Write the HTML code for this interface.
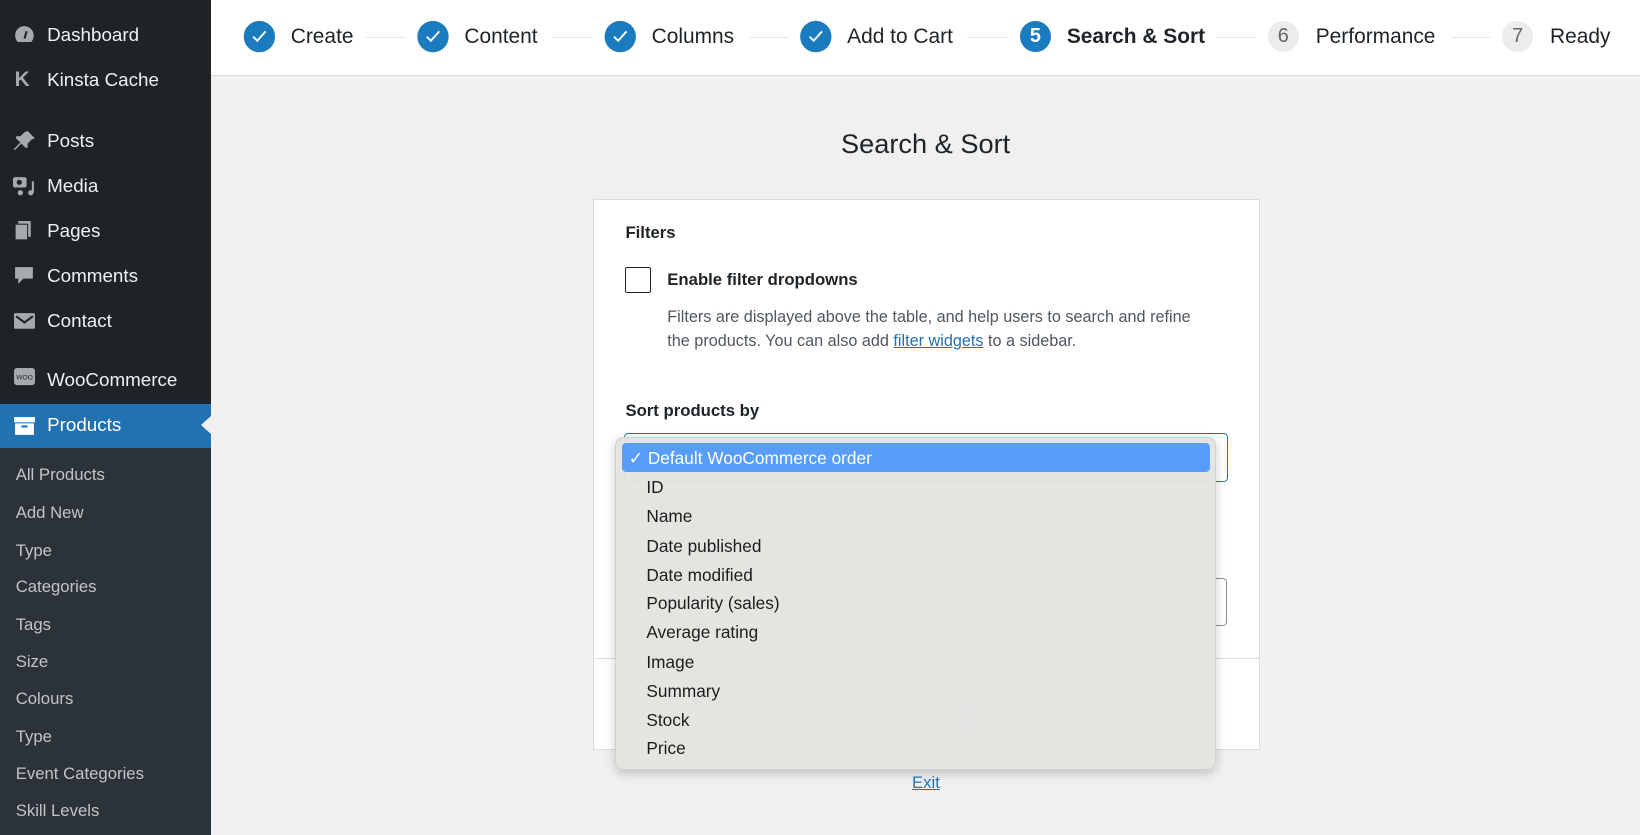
<!DOCTYPE html>
<html><head><meta charset="utf-8"><style>
html,body{margin:0;padding:0;width:1640px;height:835px;overflow:hidden;background:#f0f0f1;}
#w{position:relative;width:1568px;height:799px;zoom:1.0459;font-family:"Liberation Sans",sans-serif;}
.a{position:absolute;white-space:nowrap;}
#sb{position:absolute;left:0;top:0;width:202px;height:799px;background:#1d2327;}
#sub{position:absolute;left:0;top:428px;width:202px;height:371px;background:#2c3338;}
.m{position:absolute;left:45px;font-size:18px;color:#f0f0f1;line-height:22px;}
.ic{position:absolute;left:12px;width:22px;height:20px;}
.s{position:absolute;left:15px;font-size:16px;color:#c3c4c7;line-height:20px;}
#top{position:absolute;left:202px;top:0;width:1366px;height:72px;background:#fff;border-bottom:1px solid #dcdcde;}
.c{position:absolute;width:30px;height:30px;border-radius:50%;top:20px;text-align:center;line-height:30px;font-size:19px;}
.cb{background:#1a7bbf;color:#fff;}
.cg{background:#ececec;color:#666;}
.l{position:absolute;top:23px;font-size:20px;color:#1d2327;line-height:24px;}
.ln{position:absolute;top:35px;height:1px;background:#e6e6e6;}
.it{position:absolute;left:618px;font-size:16.5px;color:#1d1d1d;line-height:20px;}
</style></head><body><div id="w">
<div id="sb"></div><div id="sub"></div>
<div style="position:absolute;left:0;top:386px;width:202px;height:42px;background:#2271b1"></div>
<div style="position:absolute;left:192px;top:398px;width:0;height:0;border-top:9px solid transparent;border-bottom:9px solid transparent;border-right:10px solid #f0f0f1"></div>
<svg class="ic" style="top:23px" viewBox="0 0 22 20"><path d="M11 2a9 9 0 0 0-9 9c0 2.5 1 4.6 2.6 6.2h12.8A9 9 0 0 0 11 2z" fill="#a7aaad"/><path d="M11 14l2-7" stroke="#1d2327" stroke-width="2"/></svg>
<div class="a" style="left:14px;top:65px;font-size:20px;font-weight:bold;color:#a7aaad">K</div>
<svg class="ic" style="top:124px" viewBox="0 0 22 20"><path d="M14 1l7 7-3 1-4 4 0 4-2 0-4-4-6 6-1 0 0-1 6-6-4-4 0-2 4 0 4-4z" fill="#a7aaad"/></svg>
<svg class="ic" style="top:167px" viewBox="0 0 22 20"><rect x="0" y="2" width="13" height="10" rx="2" fill="#a7aaad"/><circle cx="6" cy="7" r="2.5" fill="#1d2327"/><circle cx="7" cy="17" r="2.5" fill="#a7aaad"/><circle cx="17" cy="17" r="2.5" fill="#a7aaad"/><rect x="18" y="6" width="2" height="11" fill="#a7aaad"/></svg>
<svg class="ic" style="top:210px" viewBox="0 0 22 20"><rect x="5" y="1" width="12" height="15" fill="#a7aaad"/><rect x="2" y="4" width="12" height="15" fill="#a7aaad" stroke="#1d2327"/></svg>
<svg class="ic" style="top:253px" viewBox="0 0 22 20"><path d="M2 2h17v11H10l-5 5v-5H2z" fill="#a7aaad"/></svg>
<svg class="ic" style="top:297px" viewBox="0 0 22 20"><rect x="1" y="2" width="20" height="15" rx="1" fill="#a7aaad"/><path d="M3 5l8 6 8-6" stroke="#1d2327" stroke-width="2" fill="none"/></svg>
<svg class="ic" style="top:352px" viewBox="0 0 22 22"><rect x="0" y="0" width="22" height="18" rx="3" fill="#a7aaad"/><text x="11" y="12" font-size="7" text-anchor="middle" fill="#1d2327" font-family="Liberation Sans">WOO</text></svg>
<svg class="ic" style="top:397px" viewBox="0 0 22 20"><rect x="1" y="2" width="20" height="5" fill="#fff"/><rect x="2" y="8" width="18" height="11" fill="#fff"/><rect x="8" y="10" width="6" height="2" fill="#2271b1"/></svg>
<div class="m" style="top:22px">Dashboard</div>
<div class="m" style="top:65px">Kinsta Cache</div>
<div class="m" style="top:123px">Posts</div>
<div class="m" style="top:166px">Media</div>
<div class="m" style="top:209px">Pages</div>
<div class="m" style="top:252px">Comments</div>
<div class="m" style="top:295px">Contact</div>
<div class="m" style="top:352px">WooCommerce</div>
<div class="m" style="top:395px;color:#fff">Products</div>
<div class="s" style="top:445px">All Products</div>
<div class="s" style="top:481px">Add New</div>
<div class="s" style="top:517px">Type</div>
<div class="s" style="top:552px">Categories</div>
<div class="s" style="top:588px">Tags</div>
<div class="s" style="top:623px">Size</div>
<div class="s" style="top:659px">Colours</div>
<div class="s" style="top:695px">Type</div>
<div class="s" style="top:730px">Event Categories</div>
<div class="s" style="top:766px">Skill Levels</div>

<div id="top"></div>
<div class="ln" style="left:350px;width:38px"></div>
<div class="ln" style="left:528px;width:38px"></div>
<div class="ln" style="left:716px;width:38px"></div>
<div class="ln" style="left:925px;width:38px"></div>
<div class="ln" style="left:1163px;width:38px"></div>
<div class="ln" style="left:1387px;width:38px"></div>
<svg style="position:absolute;left:0;top:0" width="1568" height="72">
<g fill="#1a7bbf"><circle cx="248" cy="35" r="15"/><circle cx="414" cy="35" r="15"/><circle cx="593" cy="35" r="15"/><circle cx="780" cy="35" r="15"/></g>
<g stroke="#fff" stroke-width="1.8" fill="none"><path d="M242 35l4 4 8-9"/><path d="M408 35l4 4 8-9"/><path d="M587 35l4 4 8-9"/><path d="M774 35l4 4 8-9"/></g>
</svg>
<div class="c cb" style="left:975px;font-weight:bold">5</div>
<div class="c cg" style="left:1212px">6</div>
<div class="c cg" style="left:1436px">7</div>
<div class="l" style="left:278px">Create</div>
<div class="l" style="left:444px">Content</div>
<div class="l" style="left:623px">Columns</div>
<div class="l" style="left:810px">Add to Cart</div>
<div class="l" style="left:1020px;font-weight:bold">Search &amp; Sort</div>
<div class="l" style="left:1258px">Performance</div>
<div class="l" style="left:1482px">Ready</div>

<div class="a" style="left:0;width:1770px;text-align:center;top:122px;font-size:26px;color:#1d2327">Search &amp; Sort</div>
<div style="position:absolute;left:567px;top:190px;width:636px;height:525px;background:#fff;border:1px solid #dcdcde"></div>
<div style="position:absolute;left:568px;top:629px;width:636px;height:1px;background:#dcdcde"></div>
<div class="a" style="left:598px;top:213px;font-size:16px;font-weight:600;color:#1d2327">Filters</div>
<div style="position:absolute;left:598px;top:255px;width:23px;height:23px;border:1.5px solid #1d2327;border-radius:2px"></div>
<div class="a" style="left:638px;top:258px;font-size:16px;font-weight:bold;color:#1d2327">Enable filter dropdowns</div>
<div class="a" style="left:638px;top:292px;font-size:15.5px;color:#50575e;line-height:23px">Filters are displayed above the table, and help users to search and refine<br>the products. You can also add <span style="color:#2271b1;text-decoration:underline">filter widgets</span> to a sidebar.</div>
<div class="a" style="left:598px;top:383px;font-size:16px;font-weight:600;color:#1d2327">Sort products by</div>
<div style="position:absolute;left:597px;top:414px;width:575px;height:45px;border:1.5px solid #2271b1;border-radius:4px"></div>
<div style="position:absolute;left:1100px;top:553px;width:72px;height:44px;border:1px solid #8c8f94;border-left:none;border-radius:0 4px 4px 0"></div>
<div style="position:absolute;left:880px;top:640px;width:90px;height:90px;border-radius:50%;background:radial-gradient(#d8e6e0,rgba(227,227,225,0) 70%)"></div>
<div style="position:absolute;left:588px;top:418px;width:575px;height:318px;background:rgba(227,227,224,0.97);border-radius:8px;box-shadow:0 3px 10px rgba(0,0,0,.2);border:1px solid #d0d0ce;box-sizing:border-box"></div>
<div style="position:absolute;left:595px;top:424px;width:562px;height:27px;background:#589ef8;border-radius:4px"></div>
<div class="it" style="left:601px;top:428px;color:#fff">✓ Default WooCommerce order</div>
<div class="it" style="top:456px">ID</div>
<div class="it" style="top:484px">Name</div>
<div class="it" style="top:512px">Date published</div>
<div class="it" style="top:540px">Date modified</div>
<div class="it" style="top:567px">Popularity (sales)</div>
<div class="it" style="top:595px">Average rating</div>
<div class="it" style="top:623px">Image</div>
<div class="it" style="top:651px">Summary</div>
<div class="it" style="top:679px">Stock</div>
<div class="it" style="top:706px">Price</div>
<div class="a" style="left:872px;top:739px;font-size:16px;color:#2271b1;text-decoration:underline">Exit</div>
</div></body></html>
